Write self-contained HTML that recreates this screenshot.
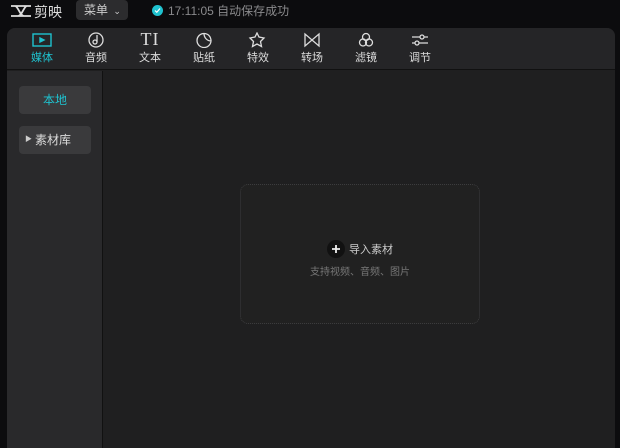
<!DOCTYPE html>
<html><head><meta charset="utf-8"><style>
*{margin:0;padding:0;box-sizing:border-box}
body{width:620px;height:436px;background:#0c0c0e;font-family:"Liberation Sans","Noto Sans CJK SC",sans-serif;position:relative;overflow:hidden;color:#ddd}
.abs{position:absolute}
.panel{left:7px;top:28px;width:608px;height:420px;background:#1f1f20;border-radius:8px 8px 0 0;overflow:hidden}
.tb{left:0;top:0;width:608px;height:42px;background:#252527;border-bottom:1px solid #111}
.tool{position:absolute;top:0;width:40px;text-align:center;font-size:11px;color:#ddd}
.tool svg{display:block;margin:4px auto 0}
.tool span{display:block;margin-top:1px}
.side{left:0;top:43px;width:96px;height:380px;background:#29292b;border-right:1px solid #111}
.btn{position:absolute;left:12px;width:72px;height:28px;background:#3a3a3c;border-radius:4px;font-size:12px;line-height:28px}
</style></head><body>
<svg class="abs" style="left:10px;top:3px" width="22" height="16" viewBox="0 0 22 16" fill="none" stroke="#ddd" stroke-width="1.8"><path d="M1 3h20M1 13h20M5 3c3 0 5 10 9 10M17 3c-3 0-5 10-9 10"/></svg>
<div class="abs" style="left:34px;top:2px;font-size:14px;color:#ddd">剪映</div>
<div class="abs" style="left:76px;top:0;width:52px;height:20px;background:#2c2c2e;border-radius:4px;font-size:12px;line-height:20px;padding-left:8px;color:#ccc">菜单 <span style="font-size:9px;margin-left:2px">⌄</span></div>
<div class="abs" style="left:152px;top:5px;width:11px;height:11px;border-radius:50%;background:#1fc2cf"></div>
<svg class="abs" style="left:154px;top:7px" width="7" height="7" viewBox="0 0 7 7" fill="none" stroke="#fff" stroke-width="1.2"><path d="M1 3.5l1.8 1.8L6 1.5"/></svg>
<div class="abs" style="left:168px;top:2px;font-size:12px;color:#8a8a8c">17:11:05 自动保存成功</div>
<div class="abs panel">
 <div class="abs tb">
  <div class="tool" style="left:15px;color:#1fc2cf"><svg width="20" height="16" viewBox="0 0 20 16" fill="none" stroke="#1fc2cf" stroke-width="1.4"><rect x="1" y="2" width="18" height="12"/><path d="M8 6l4 2-4 2z" fill="#1fc2cf"/></svg><span>媒体</span></div>
  <div class="tool" style="left:69px"><svg width="20" height="16" viewBox="0 0 20 16" fill="none" stroke="#ddd" stroke-width="1.3"><circle cx="10" cy="8" r="7"/><circle cx="9" cy="10" r="2"/><path d="M11 10V3"/></svg><span>音频</span></div>
  <div class="tool" style="left:123px"><div style="height:20px;font-family:'Liberation Serif',serif;font-size:18px;line-height:22px;letter-spacing:1px">TI</div><span>文本</span></div>
  <div class="tool" style="left:177px"><svg width="20" height="16" viewBox="0 0 20 16" fill="none" stroke="#ddd" stroke-width="1.3"><path d="M17 9A7 7 0 1 1 10 1.5c0 4 3 7.5 7 7.5zM10 1.5c4 0 7 3 7 7.5"/></svg><span>贴纸</span></div>
  <div class="tool" style="left:231px"><svg width="20" height="16" viewBox="0 0 20 16" fill="none" stroke="#ddd" stroke-width="1.3"><path d="M9 1l2 4 5 1-3.5 3.5 1 5L9 12l-4.5 2.5 1-5L2 6l5-1z"/></svg><span>特效</span></div>
  <div class="tool" style="left:285px"><svg width="20" height="16" viewBox="0 0 20 16" fill="none" stroke="#ddd" stroke-width="1.3"><path d="M3 2v12l14-12v12z"/></svg><span>转场</span></div>
  <div class="tool" style="left:339px"><svg width="20" height="16" viewBox="0 0 20 16" fill="none" stroke="#ddd" stroke-width="1.3"><circle cx="10" cy="5" r="3.5"/><circle cx="7" cy="10.5" r="3.5"/><circle cx="13" cy="10.5" r="3.5"/></svg><span>滤镜</span></div>
  <div class="tool" style="left:393px"><svg width="20" height="16" viewBox="0 0 20 16" fill="none" stroke="#ddd" stroke-width="1.3"><path d="M2 5h16M2 11h16"/><circle cx="12" cy="5" r="2" fill="#252527"/><circle cx="7" cy="11" r="2" fill="#252527"/></svg><span>调节</span></div>
 </div>
 <div class="abs side">
  <div class="btn" style="top:15px;text-align:center;color:#1fc2cf">本地</div>
  <div class="btn" style="top:55px;padding-left:16px;color:#ddd"><span style="position:absolute;left:6px;font-size:7px;color:#ccc">▶</span>素材库</div>
 </div>
 <div class="abs" style="left:233px;top:156px;width:240px;height:140px;border:1px dotted #3c3c3e;border-radius:8px;background:#212121"></div>
 <svg class="abs" style="left:320px;top:212px" width="18" height="18" viewBox="0 0 18 18"><circle cx="9" cy="9" r="9" fill="#111"/><path d="M9 5v8M5 9h8" stroke="#eee" stroke-width="1.8"/></svg>
 <div class="abs" style="left:342px;top:213px;font-size:11px;color:#ccc">导入素材</div>
 <div class="abs" style="left:303px;top:235px;font-size:10px;color:#777">支持视频、音频、图片</div>
</div>
</body></html>
